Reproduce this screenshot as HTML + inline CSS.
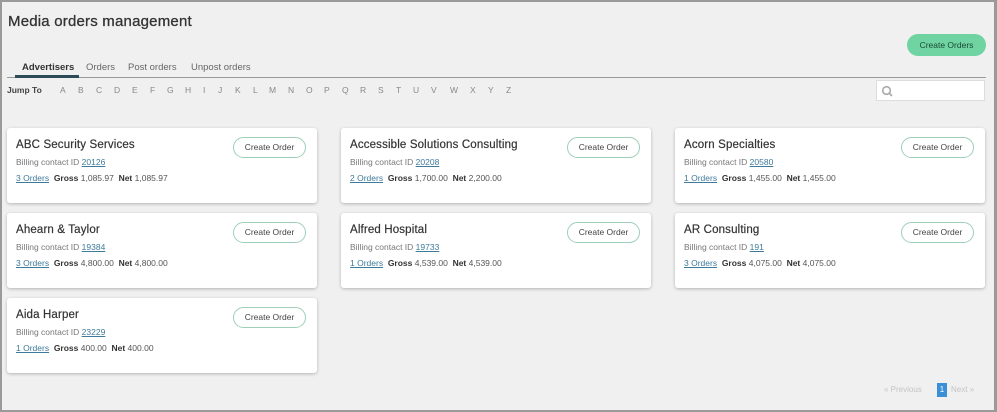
<!DOCTYPE html>
<html><head><style>
*{margin:0;padding:0;box-sizing:border-box}
body{width:997px;height:412px;overflow:hidden;background:#fff;font-family:"Liberation Sans",sans-serif;color:#333;position:relative}
.frame{position:absolute;left:0;top:0;width:997px;height:412px;border:2px solid #9a9a9a;border-right-width:3px;background:#f0f0f0}
.abs{position:absolute}
h1{position:absolute;left:8px;top:13px;font-size:15px;font-weight:normal;color:#333;letter-spacing:.2px;-webkit-text-stroke:.3px #333}
.tabs span{position:absolute;top:62px;font-size:9.5px;color:#666}
.jl{position:absolute;top:85px;font-size:8.5px;color:#888}
.card{position:absolute;width:310px;height:75px;background:#fff;border-radius:3px;box-shadow:0 1px 3px rgba(0,0,0,.25)}
.card .n{position:absolute;left:9px;top:11px;font-size:11.5px;color:#333;letter-spacing:.15px;-webkit-text-stroke:.2px #333}
.card .b{position:absolute;left:9px;top:29px;font-size:8.5px;color:#777}
.card .o{position:absolute;left:9px;top:45px;font-size:8.5px;color:#555}
.card a{color:#3e7a99;text-decoration:underline}
.card b{color:#333}
.btn{position:absolute;left:226px;top:9px;width:73px;height:21px;border:1px solid #9fcfb8;border-radius:11px;font-size:8.5px;color:#444;text-align:center;line-height:19px}
</style></head><body>
<div class="frame"></div>
<h1>Media orders management</h1>
<div class="abs" style="left:907px;top:34px;width:79px;height:22px;border-radius:11px;background:#6fd4a2;font-size:8.5px;color:#1d4a35;text-align:center;line-height:22px">Create Orders</div>
<div class="tabs">
<span style="left:22px;color:#333;font-weight:bold">Advertisers</span>
<span style="left:86px">Orders</span>
<span style="left:128px">Post orders</span>
<span style="left:191px">Unpost orders</span>
</div>
<div class="abs" style="left:7px;top:77px;width:979px;height:1px;background:#999"></div>
<div class="abs" style="left:15px;top:75px;width:64px;height:3px;background:#2c4a58"></div>
<div class="abs" style="left:7px;top:85px;font-size:8.5px;font-weight:bold;color:#444">Jump To</div>
<div class="abs" style="left:876px;top:80px;width:109px;height:21px;background:#fff;border:1px solid #ddd"><svg width="14" height="14" style="position:absolute;left:4px;top:4px"><circle cx="5.5" cy="5.5" r="3.8" fill="none" stroke="#aaa" stroke-width="1.6"/><line x1="8.3" y1="8.3" x2="11" y2="11" stroke="#aaa" stroke-width="1.8"/></svg></div>

<div class="card" style="left:7px;top:128px"><div class="n">ABC Security Services</div><div class="b">Billing contact ID <a>20126</a></div><div class="o"><a>3 Orders</a>&nbsp; <b>Gross</b> 1,085.97 &nbsp;<b>Net</b> 1,085.97</div><div class="btn">Create Order</div></div>
<div class="card" style="left:341px;top:128px"><div class="n">Accessible Solutions Consulting</div><div class="b">Billing contact ID <a>20208</a></div><div class="o"><a>2 Orders</a>&nbsp; <b>Gross</b> 1,700.00 &nbsp;<b>Net</b> 2,200.00</div><div class="btn">Create Order</div></div>
<div class="card" style="left:675px;top:128px"><div class="n">Acorn Specialties</div><div class="b">Billing contact ID <a>20580</a></div><div class="o"><a>1 Orders</a>&nbsp; <b>Gross</b> 1,455.00 &nbsp;<b>Net</b> 1,455.00</div><div class="btn">Create Order</div></div>
<div class="card" style="left:7px;top:213px"><div class="n">Ahearn &amp; Taylor</div><div class="b">Billing contact ID <a>19384</a></div><div class="o"><a>3 Orders</a>&nbsp; <b>Gross</b> 4,800.00 &nbsp;<b>Net</b> 4,800.00</div><div class="btn">Create Order</div></div>
<div class="card" style="left:341px;top:213px"><div class="n">Alfred Hospital</div><div class="b">Billing contact ID <a>19733</a></div><div class="o"><a>1 Orders</a>&nbsp; <b>Gross</b> 4,539.00 &nbsp;<b>Net</b> 4,539.00</div><div class="btn">Create Order</div></div>
<div class="card" style="left:675px;top:213px"><div class="n">AR Consulting</div><div class="b">Billing contact ID <a>191</a></div><div class="o"><a>3 Orders</a>&nbsp; <b>Gross</b> 4,075.00 &nbsp;<b>Net</b> 4,075.00</div><div class="btn">Create Order</div></div>
<div class="card" style="left:7px;top:298px"><div class="n">Aida Harper</div><div class="b">Billing contact ID <a>23229</a></div><div class="o"><a>1 Orders</a>&nbsp; <b>Gross</b> 400.00 &nbsp;<b>Net</b> 400.00</div><div class="btn">Create Order</div></div>

<div class="abs" style="left:884px;top:385px;font-size:8px;color:#c4c4c4">« Previous</div>
<div class="abs" style="left:937px;top:383px;width:10px;height:14px;background:#3b8fd6;color:#fff;font-size:8px;text-align:center;line-height:14px">1</div>
<div class="abs" style="left:951px;top:385px;font-size:8px;color:#c4c4c4">Next »</div>

<span class="jl" style="left:60px">A</span><span class="jl" style="left:78px">B</span><span class="jl" style="left:96px">C</span><span class="jl" style="left:114px">D</span><span class="jl" style="left:132px">E</span><span class="jl" style="left:150px">F</span><span class="jl" style="left:167px">G</span><span class="jl" style="left:185px">H</span><span class="jl" style="left:203px">I</span><span class="jl" style="left:218px">J</span><span class="jl" style="left:235px">K</span><span class="jl" style="left:253px">L</span><span class="jl" style="left:269px">M</span><span class="jl" style="left:288px">N</span><span class="jl" style="left:306px">O</span><span class="jl" style="left:324px">P</span><span class="jl" style="left:342px">Q</span><span class="jl" style="left:360px">R</span><span class="jl" style="left:378px">S</span><span class="jl" style="left:396px">T</span><span class="jl" style="left:413px">U</span><span class="jl" style="left:431px">V</span><span class="jl" style="left:450px">W</span><span class="jl" style="left:470px">X</span><span class="jl" style="left:488px">Y</span><span class="jl" style="left:506px">Z</span>
</body></html>
